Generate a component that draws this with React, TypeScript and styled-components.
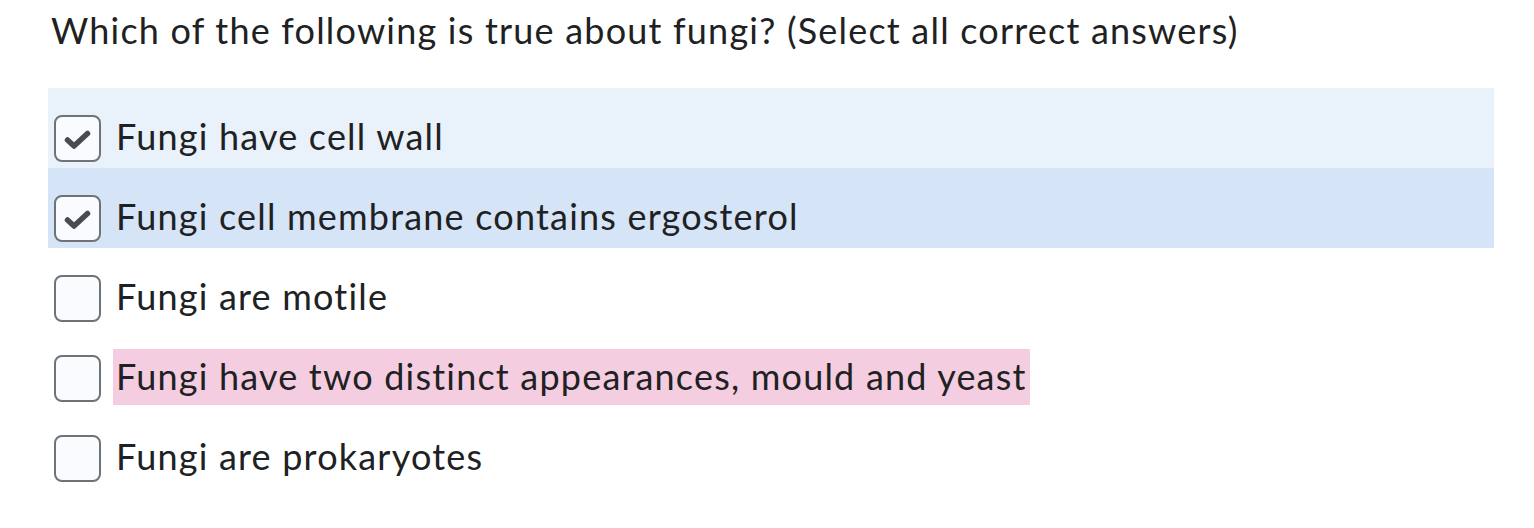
import styled, { createGlobalStyle } from "styled-components";

const GlobalStyle = createGlobalStyle`
  body {
    margin: 0;
    background: #ffffff;
    font-family: Lato, "Noto Sans", sans-serif;
    color: #202122;
  }
`;

const Page = styled.div`
  padding: 7px 40px 0 48px;
`;

const Question = styled.h2`
  margin: 0 0 35px 3px;
  font-size: 36px;
  font-weight: 400;
  letter-spacing: 1.2px;
  line-height: 46px;
`;

const Options = styled.div`
  display: flex;
  flex-direction: column;
  width: 1446px;
`;

const Row = styled.label<{ $tone?: "light" | "dark" }>`
  box-sizing: border-box;
  height: 80px;
  display: flex;
  align-items: flex-start;
  gap: 15px;
  padding: 21px 6px 0;
  background: ${(p) =>
    p.$tone === "dark" ? "#d5e4f7" : p.$tone === "light" ? "#e9f1fb" : "transparent"};
  cursor: pointer;
`;

const Box = styled.span`
  box-sizing: border-box;
  flex: none;
  width: 47px;
  height: 47px;
  margin-top: 6px;
  border: 2px solid #6e7376;
  border-radius: 8px;
  background: #f9fbff;
  display: flex;
  align-items: center;
  justify-content: center;
`;

const Text = styled.span<{ $marked?: boolean }>`
  font-size: 36px;
  letter-spacing: 1.2px;
  line-height: normal;
  padding: 5px 3px 7px;
  margin-left: -3px;
  background: ${(p) => (p.$marked ? "#f5cde0" : "transparent")};
`;

const Check = () => (
  <svg width="43" height="43" viewBox="0 0 43 43">
    <polyline
      points="11.5,23 18,29 31.5,16.5"
      fill="none"
      stroke="#494c4e"
      strokeWidth="5.5"
      strokeLinecap="round"
      strokeLinejoin="round"
    />
  </svg>
);

const options = [
  { text: "Fungi have cell wall", checked: true, tone: "light" as const },
  { text: "Fungi cell membrane contains ergosterol", checked: true, tone: "dark" as const },
  { text: "Fungi are motile", checked: false },
  { text: "Fungi have two distinct appearances, mould and yeast", checked: false, marked: true },
  { text: "Fungi are prokaryotes", checked: false },
];

export default function App() {
  return (
    <>
      <GlobalStyle />
      <Page>
        <Question>Which of the following is true about fungi? (Select all correct answers)</Question>
        <Options>
          {options.map((o) => (
            <Row key={o.text} $tone={o.tone}>
              <Box>{o.checked && <Check />}</Box>
              <Text $marked={o.marked}>{o.text}</Text>
            </Row>
          ))}
        </Options>
      </Page>
    </>
  );
}
